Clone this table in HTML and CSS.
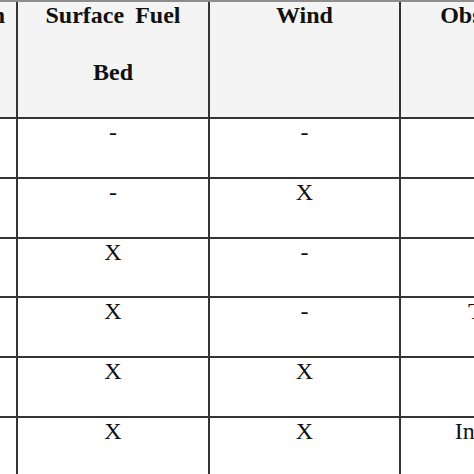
FILE: index.html
```html
<!DOCTYPE html>
<html>
<head>
<meta charset="utf-8">
<link rel="stylesheet" href="styles.css">
</head>
<body>
<div class="viewport">
  <div class="table">
    <div class="cell head"><div class="htext">Simulation</div></div>
    <div class="cell head"><div class="htext spaced">Surface Fuel<br>Bed</div></div>
    <div class="cell head"><div class="htext">Wind</div></div>
    <div class="cell head"><div class="htext">Observed</div></div>

    <div class="cell">1</div><div class="cell">-</div><div class="cell">-</div><div class="cell"></div>
    <div class="cell">2</div><div class="cell">-</div><div class="cell">X</div><div class="cell"></div>
    <div class="cell">3</div><div class="cell">X</div><div class="cell">-</div><div class="cell"></div>
    <div class="cell">4</div><div class="cell">X</div><div class="cell">-</div><div class="cell">Tree</div>
    <div class="cell">5</div><div class="cell">X</div><div class="cell">X</div><div class="cell"></div>
    <div class="cell">6</div><div class="cell">X</div><div class="cell">X</div><div class="cell">Intense</div>
  </div>
</div>
</body>
</html>
```

FILE: styles.css
```css
html, body {
  margin: 0;
  padding: 0;
  background: #ffffff;
}
.viewport {
  width: 474px;
  height: 474px;
  overflow: hidden;
}
.table {
  margin-left: -118px;
  width: 734px;
  display: grid;
  grid-template-columns: 134px 190px 189px 177px;
  grid-template-rows: 115px repeat(6, 57.8px);
  gap: 2px;
  background: #343434;
  border-top: 2px solid #8e8e8e;
  font-family: "Liberation Serif", "Times New Roman", serif;
  color: #111111;
}
.cell {
  background: #ffffff;
  text-align: center;
  font-size: 24px;
  line-height: 24px;
  padding-top: 1px;
  overflow: hidden;
  white-space: nowrap;
}
.cell.head {
  background: #f4f4f4;
  padding-top: 0;
  font-weight: bold;
}
.htext {
  line-height: 57.5px;
  margin-top: -15.5px;
}
.spaced {
  word-spacing: 5px;
}
```
